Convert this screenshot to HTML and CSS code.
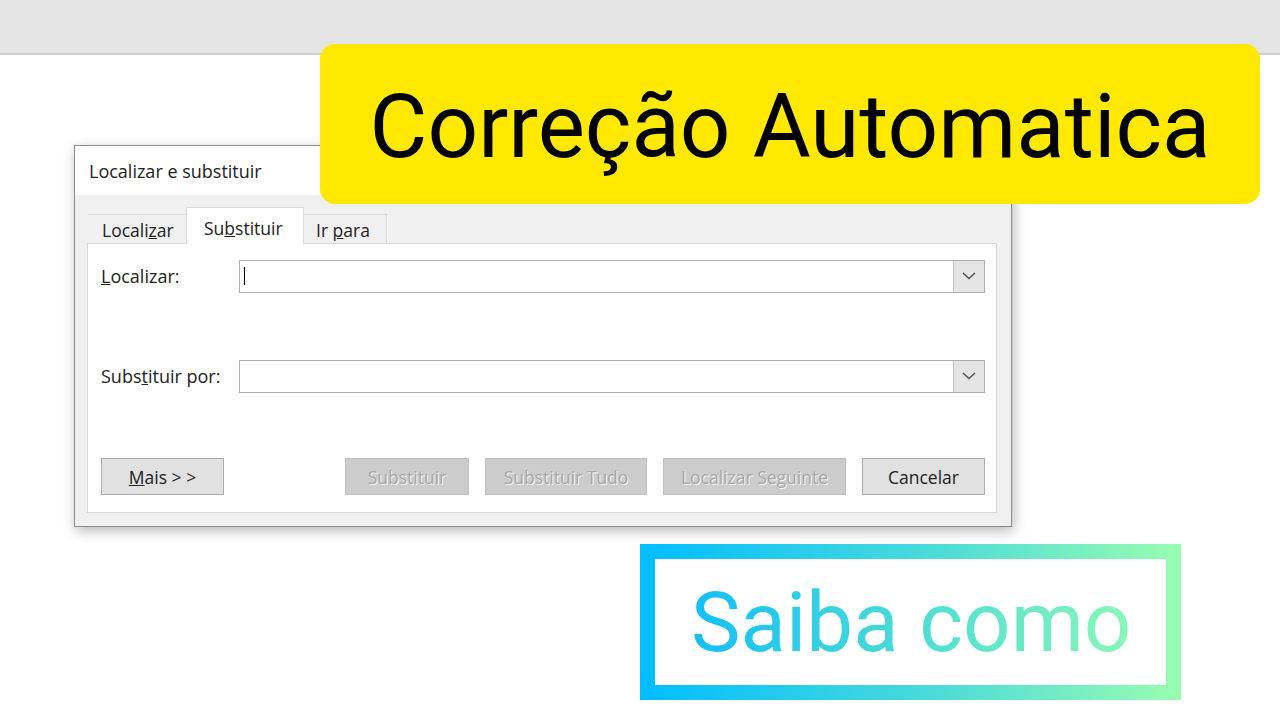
FILE: index.html
```html
<!DOCTYPE html>
<html lang="pt">
<head>
  <meta charset="UTF-8">
  <title>Correção Automatica</title>
  <link rel="stylesheet" href="styles.css">
</head>
<body>

<div class="topbar"></div>

<div class="stage">
  <div class="dialog">
    <div class="dialog-title">Localizar e substituir</div>
    <div class="dialog-body">
      <div class="tabs">
        <div class="tab t-find">Locali<u>z</u>ar</div>
        <div class="tab active">Su<u>b</u>stituir</div>
        <div class="tab t-go">Ir <u>p</u>ara</div>
      </div>
      <div class="panel">
        <div class="field">
          <label><u>L</u>ocalizar:</label>
          <div class="combo">
            <span class="caret"></span>
            <span class="drop">
              <svg width="14" height="8" viewBox="0 0 14 8"><path d="M1 1 L7 6.5 L13 1" fill="none" stroke="#555" stroke-width="1.6"/></svg>
            </span>
          </div>
        </div>
        <div class="field second">
          <label>Subs<u>t</u>ituir por:</label>
          <div class="combo">
            <span class="drop">
              <svg width="14" height="8" viewBox="0 0 14 8"><path d="M1 1 L7 6.5 L13 1" fill="none" stroke="#555" stroke-width="1.6"/></svg>
            </span>
          </div>
        </div>
        <div class="buttons">
          <button class="btn more"><u>M</u>ais &gt; &gt;</button>
          <div class="spacer"></div>
          <button class="btn off w-sub">Substituir</button>
          <button class="btn off w-all">Substituir Tudo</button>
          <button class="btn off w-next">Localizar Seguinte</button>
          <button class="btn cancel">Cancelar</button>
        </div>
      </div>
    </div>
  </div>

  <div class="saiba">
    <div class="saiba-inner"><span>Saiba como</span></div>
  </div>

  <div class="headline">Correção Automatica</div>
</div>

</body>
</html>
```

FILE: styles.css
```css
body {
  margin: 0;
  background: #fff;
  font-family: "Open Sans", "Noto Sans", sans-serif;
  width: 1280px;
  height: 720px;
  overflow: hidden;
}
.topbar {
  height: 53px;
  background: #e4e4e4;
  border-bottom: 2px solid #cfcfcf;
}
.stage {
  position: relative;
  padding: 90px 0 0 74px;
}

/* dialog */
.dialog {
  width: 936px;
  border: 1px solid #8c8c8c;
  background: #f0f0f0;
  box-shadow: 2px 4px 12px rgba(0,0,0,0.28);
}
.dialog-title {
  background: #fff;
  height: 49px;
  line-height: 50px;
  padding-left: 14px;
  font-size: 18px;
  color: #222;
}
.dialog-body {
  padding: 11px 14px 13px 12px;
}
.tabs {
  display: flex;
  align-items: flex-end;
  height: 37px;
  margin-left: 1px;
}
.tab {
  box-sizing: border-box;
  height: 29px;
  line-height: 30px;
  font-size: 17.5px;
  color: #222;
  border: 1px solid #d9d9d9;
  border-bottom: none;
  background: #f0f0f0;
}
.tab.t-find {
  width: 98px;
  padding-left: 14px;
  border-left: none;
  border-right: none;
}
.tab.active {
  width: 118px;
  height: 37px;
  line-height: 40px;
  padding-left: 17px;
  background: #fff;
  position: relative;
  top: 1px;
  z-index: 1;
}
.tab.t-go {
  width: 83px;
  padding-left: 12px;
  border-left: none;
}
.panel {
  box-sizing: border-box;
  background: #fff;
  border: 1px solid #d9d9d9;
  height: 270px;
  padding: 15px 11px 0 13px;
}
.field {
  display: flex;
  align-items: center;
  height: 34px;
}
.field.second {
  margin-top: 66px;
}
.field label {
  width: 138px;
  font-size: 18px;
  color: #222;
}
.combo {
  flex: 1;
  height: 31px;
  border: 1px solid #adadad;
  display: flex;
  justify-content: space-between;
  align-items: stretch;
  background: #fff;
}
.caret {
  width: 1px;
  height: 18px;
  background: #000;
  margin: 6px 0 0 4px;
}
.drop {
  width: 30px;
  margin-left: auto;
  background: #e5e5e5;
  border-left: 1px solid #c4c4c4;
  display: flex;
  align-items: center;
  justify-content: center;
}
.buttons {
  display: flex;
  margin-top: 65px;
  gap: 16px;
}
.spacer {
  flex: 1;
}
.btn {
  box-sizing: border-box;
  height: 37px;
  font-family: "Open Sans", "Noto Sans", sans-serif;
  font-size: 17.5px;
  color: #222;
  background: #e1e1e1;
  border: 1px solid #adadad;
  padding: 0;
}
.btn.more {
  width: 123px;
}
.btn.cancel {
  width: 123px;
}
.btn.off {
  background: #cccccc;
  border-color: #bfbfbf;
  color: #a8a8a8;
  text-shadow: 1px 1px 0 #f4f4f4;
}
.w-sub { width: 124px; }
.w-all { width: 162px; }
.w-next { width: 183px; }

/* gradient box */
.saiba {
  margin: 17px 0 0 566px;
  width: 541px;
  height: 156px;
  padding: 15px;
  box-sizing: border-box;
  background: linear-gradient(90deg, #00bdff 0%, #4cdbd8 55%, #98fdb0 100%);
}
.saiba-inner {
  background: #fff;
  height: 100%;
  display: flex;
  align-items: center;
  padding-left: 36px;
}
.saiba-inner span {
  font-family: Roboto, sans-serif;
  font-size: 83.5px;
  line-height: 1;
  margin-top: 2px;
  background: linear-gradient(90deg, #14bff5 0%, #4cdcd6 50%, #8af7b8 100%);
  -webkit-background-clip: text;
  background-clip: text;
  color: transparent;
}

/* headline overlay */
.headline {
  position: absolute;
  top: -11px;
  left: 320px;
  width: 940px;
  height: 160px;
  background: #ffe900;
  border-radius: 15px;
  font-family: Roboto, sans-serif;
  font-size: 89px;
  color: #000;
  display: flex;
  align-items: center;
  justify-content: center;
  padding-top: 4px;
  box-sizing: border-box;
}
```
